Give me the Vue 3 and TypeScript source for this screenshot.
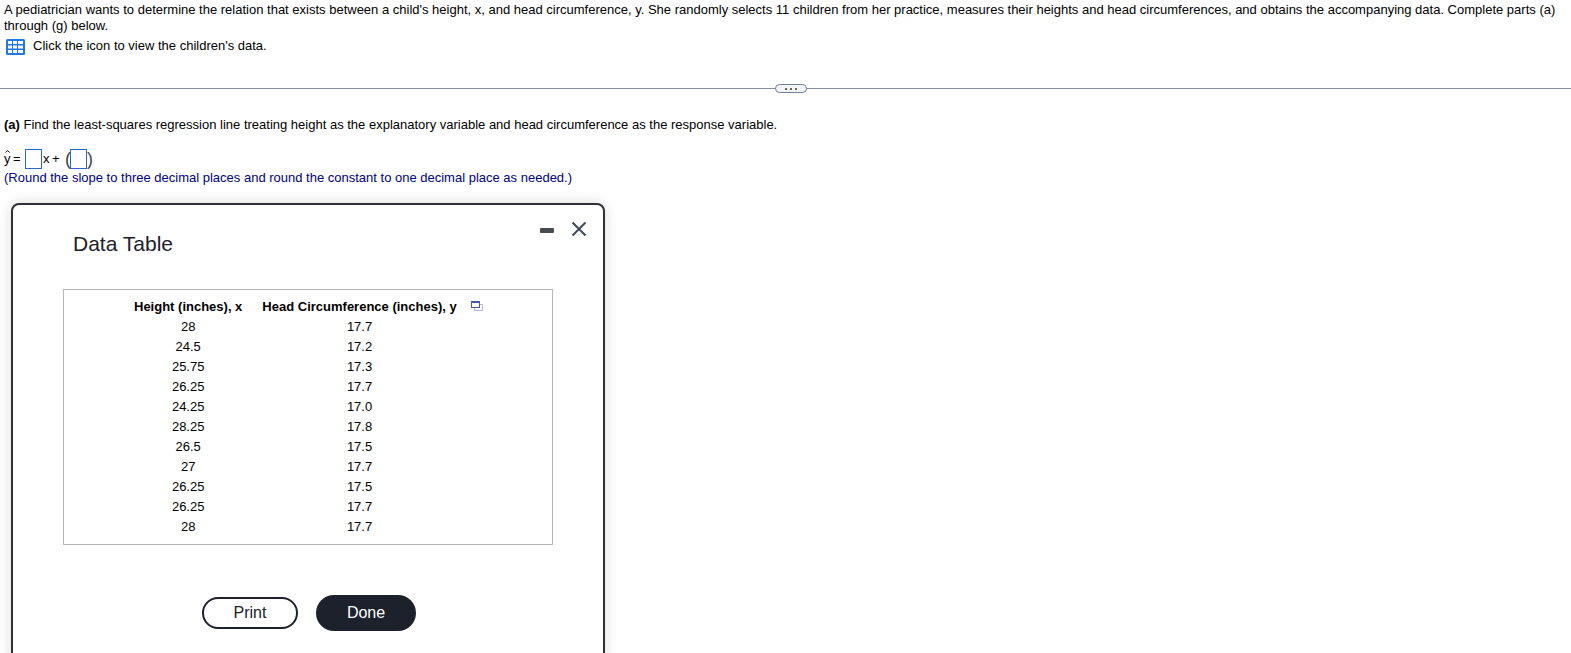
<script setup lang="ts">
import { ref } from 'vue'

interface Measurement {
  height: string
  head: string
}

const slope = ref('')
const constant = ref('')

const measurements: Measurement[] = [
  { height: '28', head: '17.7' },
  { height: '24.5', head: '17.2' },
  { height: '25.75', head: '17.3' },
  { height: '26.25', head: '17.7' },
  { height: '24.25', head: '17.0' },
  { height: '28.25', head: '17.8' },
  { height: '26.5', head: '17.5' },
  { height: '27', head: '17.7' },
  { height: '26.25', head: '17.5' },
  { height: '26.25', head: '17.7' },
  { height: '28', head: '17.7' },
]
</script>

<template>
  <main class="page">
    <section class="intro">
      <p>
        A pediatrician wants to determine the relation that exists between a child's height, x, and head
        circumference, y. She randomly selects 11 children from her practice, measures their heights and head
        circumferences, and obtains the accompanying data. Complete parts (a) through (g) below.
      </p>
      <div class="data-link">
        <button class="icon-button" type="button" aria-label="View the children's data">
          <svg width="19" height="16" viewBox="0 0 19 16">
            <rect width="19" height="16" rx="1.5" fill="#2377dc" />
            <g fill="#fff">
              <rect x="2" y="2" width="4" height="3" />
              <rect x="7" y="2" width="4" height="3" />
              <rect x="12" y="2" width="5" height="3" />
              <rect x="2" y="6.5" width="4" height="3" />
              <rect x="7" y="6.5" width="4" height="3" />
              <rect x="12" y="6.5" width="5" height="3" />
              <rect x="2" y="11" width="4" height="3" />
              <rect x="7" y="11" width="4" height="3" />
              <rect x="12" y="11" width="5" height="3" />
            </g>
          </svg>
        </button>
        <span>Click the icon to view the children's data.</span>
      </div>
    </section>

    <div class="divider">
      <button class="handle" type="button" aria-label="Resize panels"><i></i><i></i><i></i></button>
    </div>

    <section class="question">
      <p><b>(a)</b> Find the least-squares regression line treating height as the explanatory variable and head circumference as the response variable.</p>
      <div class="equation">
        <span class="y-hat">
          <svg class="hat" width="5" height="3" viewBox="0 0 5 3"><path d="M.5 2.5 2.5.6 4.5 2.5" fill="none" stroke="#000" /></svg>y</span>
        <span class="equals">=</span>
        <input v-model="slope" type="text" aria-label="Slope" />
        <span class="term">x</span>
        <span class="plus">+</span>
        <span class="paren">(</span>
        <input v-model="constant" type="text" aria-label="Constant" />
        <span class="paren">)</span>
      </div>
      <p class="hint">(Round the slope to three decimal places and round the constant to one decimal place as needed.)</p>
    </section>

    <section class="dialog" role="dialog" aria-labelledby="dialog-title">
      <header class="dialog-head">
        <h2 id="dialog-title">Data Table</h2>
        <div class="window-controls">
          <button class="icon-button" type="button" aria-label="Minimize">
            <svg width="14" height="16" viewBox="0 0 14 16"><rect y="7" width="14" height="5" rx="1" fill="#484b4f" /></svg>
          </button>
          <button class="icon-button" type="button" aria-label="Close">
            <svg width="16" height="16" viewBox="0 0 16 16"><path d="M1.5 1.5l13 13M14.5 1.5l-13 13" stroke="#3e4a59" stroke-width="2" /></svg>
          </button>
        </div>
      </header>

      <div class="data-frame">
        <table>
          <thead>
            <tr>
              <th scope="col">Height (inches), x</th>
              <th scope="col">Head Circumference (inches), y</th>
            </tr>
          </thead>
          <tbody>
            <tr v-for="(row, index) in measurements" :key="index">
              <td>{{ row.height }}</td>
              <td>{{ row.head }}</td>
            </tr>
          </tbody>
        </table>
        <button class="icon-button copy" type="button" aria-label="Copy data">
          <svg width="12" height="10" viewBox="0 0 12 10">
            <path d="M9 3.5h2.5v6h-8V7" fill="none" stroke="#b3b7dc" />
            <rect x=".5" y="1" width="8" height="5.5" fill="#fff" stroke="#4a58a8" />
            <path d="M0 1h9" stroke="#4a58a8" stroke-width="2" />
          </svg>
        </button>
      </div>

      <footer class="actions">
        <button class="print" type="button">Print</button>
        <button class="done" type="button">Done</button>
      </footer>
    </section>
  </main>
</template>

<style>
body {
  background: #fff;
}
</style>

<style scoped>
* {
  box-sizing: border-box;
}

.page {
  height: 100vh;
  overflow: hidden;
  font: 13px/16px "Liberation Sans", Arial, sans-serif;
  color: #000;
}

p,
h2 {
  margin: 0;
}

button {
  font-family: inherit;
  cursor: pointer;
}

.icon-button {
  display: block;
  padding: 0;
  border: 0;
  background: none;
}

.icon-button svg {
  display: block;
}

.intro {
  padding: 2px 4px 0;
}

.data-link {
  display: flex;
  gap: 8px;
  padding: 4px 2px 0;
}

.data-link .icon-button {
  padding-top: 1px;
}

.divider {
  display: flex;
  align-items: center;
  justify-content: center;
  margin-top: 29px;
  padding-left: 11px;
  background: linear-gradient(#868fa3, #868fa3) center / 100% 1px no-repeat;
}

.handle {
  display: flex;
  align-items: center;
  justify-content: center;
  gap: 3px;
  width: 32px;
  height: 9px;
  padding: 0;
  border: 1px solid #708095;
  border-radius: 5px;
  background: #f3f4f8;
}

.handle i {
  width: 2px;
  height: 2px;
  background: #666;
}

.question {
  padding: 24px 4px 0;
}

.equation {
  display: flex;
  align-items: center;
  height: 20px;
  margin-top: 16px;
}

.equation input {
  width: 17px;
  height: 20px;
  padding: 0;
  border: 1px solid #2f66c5;
  border-radius: 0;
  background: #fff;
  font: inherit;
  text-align: center;
}

.y-hat {
  position: relative;
  width: 9px;
}

.hat {
  position: absolute;
  top: -1px;
  left: 1px;
}

.equals {
  width: 12px;
}

.term {
  width: 10px;
  padding-left: 1px;
}

.plus {
  width: 13px;
}

.paren {
  width: 5px;
  font-size: 18px;
  line-height: 20px;
  color: #444;
}

.hint {
  margin-top: 1px;
  color: #000080;
}

.dialog {
  width: 594px;
  max-width: calc(100% - 22px);
  margin: 17px 0 0 11px;
  padding: 16px 50px 32px;
  border: 2px solid #303134;
  border-radius: 8px;
  background: #fff;
  box-shadow: 0 0 14px rgba(0, 0, 0, 0.14);
}

.dialog-head {
  display: flex;
  justify-content: space-between;
  align-items: flex-start;
  padding-left: 10px;
}

h2 {
  padding-top: 11px;
  font-size: 21px;
  font-weight: 400;
  line-height: 24px;
  color: #1c212c;
}

.window-controls {
  display: flex;
  gap: 17px;
  margin-right: -34px;
}

.data-frame {
  display: flex;
  align-items: flex-start;
  margin-top: 33px;
  padding: 7px 0 7px 60px;
  border: 1px solid #b5b5b5;
}

table {
  border-collapse: collapse;
}

th,
td {
  height: 20px;
  padding: 0 10px;
  text-align: center;
  white-space: nowrap;
}

.copy {
  padding: 4px 0 0 4px;
}

.actions {
  display: flex;
  align-items: center;
  justify-content: center;
  gap: 18px;
  margin-top: 50px;
  padding-left: 2px;
}

.actions button {
  padding: 0;
  font-size: 16px;
  line-height: 20px;
}

.print {
  width: 96px;
  height: 32px;
  border: 2px solid #1c212c;
  border-radius: 16px;
  background: #fff;
  color: #1c212c;
}

.done {
  width: 100px;
  height: 36px;
  border: 0;
  border-radius: 18px;
  background: #1c212c;
  color: #fff;
}
</style>
